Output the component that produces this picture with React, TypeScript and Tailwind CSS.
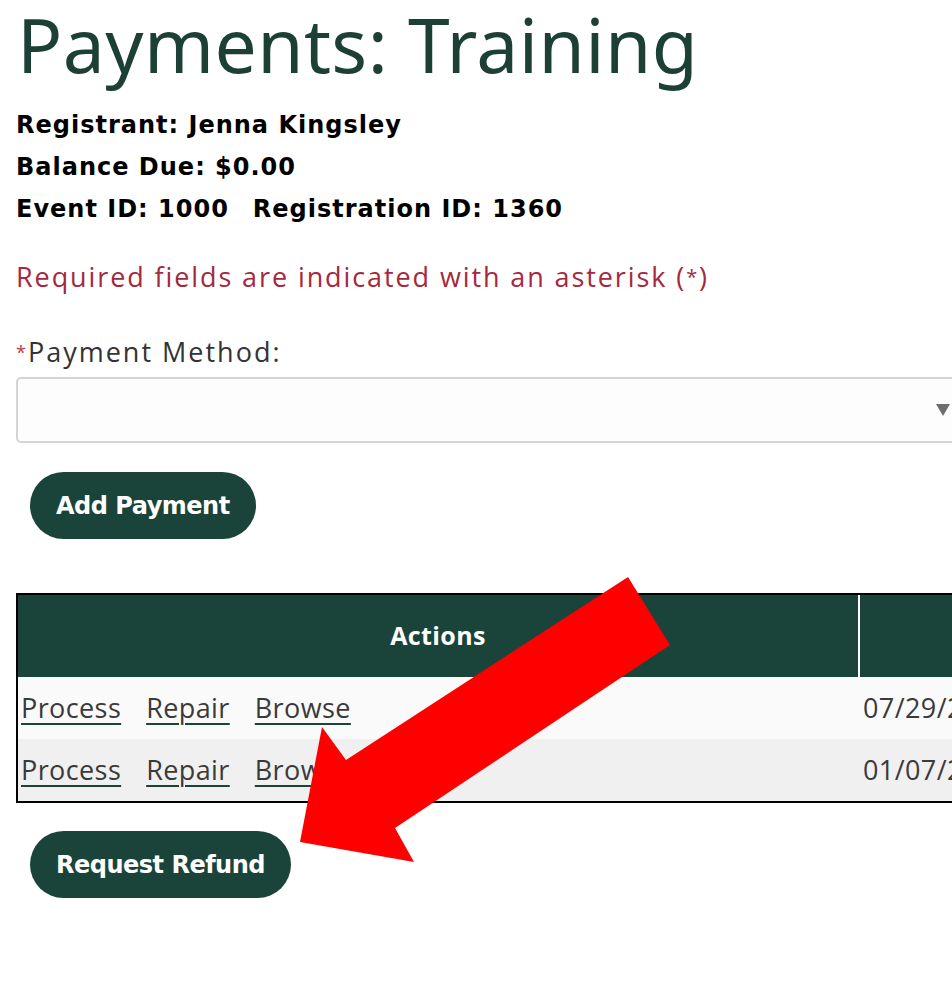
import React from 'react';

const GREEN = 'bg-[#1a443a]';

const rows = [
  { date: '07/29/2024', shade: 'bg-[#fafafa]' },
  { date: '01/07/2025', shade: 'bg-[#f0f0f0]' },
];

function PillButton({ label }: { label: string }) {
  return (
    <button
      className={`${GREEN} rounded-full text-white font-bold text-[24px] leading-none px-[26px] h-[67px] [font-family:'DejaVu_Sans','Noto_Sans',sans-serif] tracking-[-0.5px]`}
    >
      {label}
    </button>
  );
}

export default function App() {
  return (
    <div className="relative w-[952px] h-[986px] overflow-hidden bg-white">
      <div className="w-[1200px] pl-[16px]">
        {/* Title */}
        <h1 className="text-[#1c3f36] text-[75px] leading-[88px] [font-family:'Noto_Sans',sans-serif] font-normal tracking-[0.4px] pl-[1px]">
          Payments: Training
        </h1>

        {/* Registrant info */}
        <div className="mt-[16px] flex flex-col text-[24px] leading-[42px] font-bold text-black [font-family:'DejaVu_Sans',sans-serif] tracking-[1px]">
          <span>Registrant: Jenna Kingsley</span>
          <span>Balance Due: $0.00</span>
          <span>
            Event ID: 1000<span className="inline-block w-[24px]" />Registration ID: 1360
          </span>
        </div>

        {/* Required note */}
        <p className="mt-[32px] text-[#a6283c] text-[27px] leading-[30px] [font-family:'Open_Sans',sans-serif] tracking-[1.9px]">
          Required fields are indicated with an asterisk (<span className="text-[20px] align-top">*</span>)
        </p>

        {/* Payment method */}
        <div className="mt-[45px] text-[27px] leading-[30px] text-[#333] [font-family:'Open_Sans',sans-serif] tracking-[2px]">
          <span className="text-[#c0394b] text-[18px] align-top">*</span>Payment Method:
        </div>
        <div className="mt-[10px] w-[1000px] h-[66px] border-2 border-[#d4d4d4] rounded-[5px] bg-[#fdfdfd] flex items-center">
          <div className="w-[935px] flex justify-end pr-[3px]">
            <svg width="14" height="12" viewBox="0 0 14 12">
              <polygon points="0,0 14,0 7,12" fill="#6e6e6e" />
            </svg>
          </div>
        </div>

        <div className="mt-[29px] pl-[14px]">
          <PillButton label="Add Payment" />
        </div>

        {/* Table */}
        <div className="mt-[54px] w-[1100px] border-2 border-black">
          <div className={`${GREEN} flex h-[82px]`}>
            <div className="w-[840px] flex items-center justify-center text-white font-bold text-[25px] [font-family:'Open_Sans',sans-serif] tracking-[0.4px]">
              Actions
            </div>
            <div className="w-[2px] bg-white" />
            <div className="flex-1" />
          </div>
          {rows.map((row) => (
            <div key={row.date} className={`${row.shade} flex h-[62px] items-center text-[27px] [font-family:'Open_Sans',sans-serif] text-[#3a3a3a]`}>
              <div className="w-[842px] flex gap-[25px] pl-[3px] tracking-[0.4px]">
                {['Process', 'Repair', 'Browse'].map((l) => (
                  <a key={l} href="#" className="underline decoration-[#1a443a] decoration-2 underline-offset-[5px]">
                    {l}
                  </a>
                ))}
              </div>
              <div className="pl-[3px] tracking-[0.4px] whitespace-nowrap">{row.date}</div>
            </div>
          ))}
        </div>

        <div className="mt-[28px] pl-[14px]">
          <PillButton label="Request Refund" />
        </div>
      </div>

      {/* Annotation arrow */}
      <svg className="absolute left-0 top-0 pointer-events-none" width="952" height="986">
        <polygon
          points="628,577 670,645 395,828 414,862 300,842 322,727 346,760"
          fill="#ff0000"
        />
      </svg>
    </div>
  );
}
